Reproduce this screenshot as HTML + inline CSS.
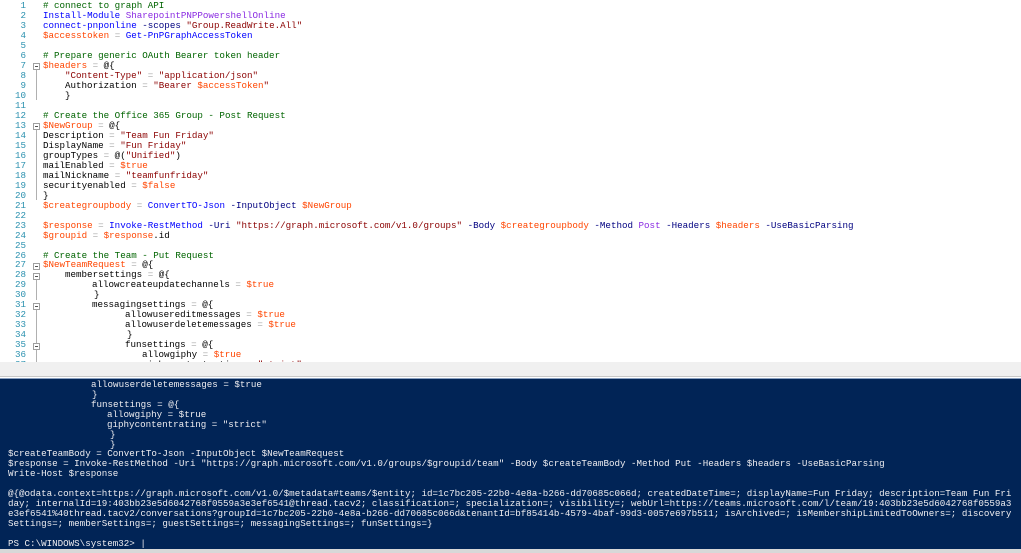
<!DOCTYPE html>
<html><head><meta charset="utf-8"><style>
html,body{margin:0;padding:0;width:1021px;height:553px;overflow:hidden;background:#fff;}
body{font-family:"Liberation Mono",monospace;font-size:9.2px;}
#ed{position:absolute;left:0;top:0;width:1021px;height:362px;overflow:hidden;background:#fff;}
#in{position:absolute;left:0;top:1px;width:1021px;height:370px;}
.l{position:absolute;white-space:pre;line-height:10px;color:#000;}
.n{position:absolute;width:26px;text-align:right;color:#2b91af;line-height:10px;}
.c{color:#006400}.k{color:#0000ff}.s{color:#8b0000}.v{color:#ff4500}.p{color:#000080}.o{color:#a9a9a9}.pu{color:#8a2be2}
.f{position:absolute;left:33px;width:7px;height:7px;border:1px solid #a0a0a0;box-sizing:border-box;background:#fff}
.f:after{content:"";position:absolute;left:1px;top:2px;width:3px;height:1px;background:#555}
.vl{position:absolute;left:36px;width:1px;background:#b0b0b0}
#sb{position:absolute;left:0;top:362px;width:1021px;height:14px;background:#f0f0f0;border-bottom:1px solid #c8c8c8}
#con{position:absolute;left:0;top:378px;width:1021px;height:171px;background:#012456;overflow:hidden;border-top:1px solid #8aa0c0}
#con .l{color:#eeedf0}
#bot{position:absolute;left:0;top:549px;width:1021px;height:4px;background:#d8d8d8}
</style></head><body>
<div id="ed"><div id="in">
<div class="n" style="top:0">1</div><div class="l" style="left:43px;top:0"><span class="c"># connect to graph API</span></div>
<div class="n" style="top:10px">2</div><div class="l" style="left:43px;top:10px"><span class="k">Install-Module</span> <span class="pu">SharepointPNPPowershellOnline</span></div>
<div class="n" style="top:20px">3</div><div class="l" style="left:43px;top:20px"><span class="k">connect-pnponline</span> <span class="p">-scopes</span> <span class="s">"Group.ReadWrite.All"</span></div>
<div class="n" style="top:30px">4</div><div class="l" style="left:43px;top:30px"><span class="v">$accesstoken</span> <span class="o">=</span> <span class="k">Get-PnPGraphAccessToken</span></div>
<div class="n" style="top:40px">5</div>
<div class="n" style="top:50px">6</div><div class="l" style="left:43px;top:50px"><span class="c"># Prepare generic OAuth Bearer token header</span></div>
<div class="n" style="top:60px">7</div><div class="f" style="top:62px"></div><div class="vl" style="top:69px;height:30px"></div><div class="l" style="left:43px;top:60px"><span class="v">$headers</span> <span class="o">=</span> @{</div>
<div class="n" style="top:70px">8</div><div class="l" style="left:65px;top:70px"><span class="s">"Content-Type"</span> <span class="o">=</span> <span class="s">"application/json"</span></div>
<div class="n" style="top:80px">9</div><div class="l" style="left:65px;top:80px">Authorization <span class="o">=</span> <span class="s">"Bearer <span class="v">$accessToken</span>"</span></div>
<div class="n" style="top:90px">10</div><div class="l" style="left:65px;top:90px">}</div>
<div class="n" style="top:100px">11</div>
<div class="n" style="top:110px">12</div><div class="l" style="left:43px;top:110px"><span class="c"># Create the Office 365 Group - Post Request</span></div>
<div class="n" style="top:120px">13</div><div class="f" style="top:122px"></div><div class="vl" style="top:129px;height:70px"></div><div class="l" style="left:43px;top:120px"><span class="v">$NewGroup</span> <span class="o">=</span> @{</div>
<div class="n" style="top:130px">14</div><div class="l" style="left:43px;top:130px">Description <span class="o">=</span> <span class="s">"Team Fun Friday"</span></div>
<div class="n" style="top:140px">15</div><div class="l" style="left:43px;top:140px">DisplayName <span class="o">=</span> <span class="s">"Fun Friday"</span></div>
<div class="n" style="top:150px">16</div><div class="l" style="left:43px;top:150px">groupTypes <span class="o">=</span> @(<span class="s">"Unified"</span>)</div>
<div class="n" style="top:160px">17</div><div class="l" style="left:43px;top:160px">mailEnabled <span class="o">=</span> <span class="v">$true</span></div>
<div class="n" style="top:170px">18</div><div class="l" style="left:43px;top:170px">mailNickname <span class="o">=</span> <span class="s">"teamfunfriday"</span></div>
<div class="n" style="top:180px">19</div><div class="l" style="left:43px;top:180px">securityenabled <span class="o">=</span> <span class="v">$false</span></div>
<div class="n" style="top:190px">20</div><div class="l" style="left:43px;top:190px">}</div>
<div class="n" style="top:200px">21</div><div class="l" style="left:43px;top:200px"><span class="v">$creategroupbody</span> <span class="o">=</span> <span class="k">ConvertTO-Json</span> <span class="p">-InputObject</span> <span class="v">$NewGroup</span></div>
<div class="n" style="top:210px">22</div>
<div class="n" style="top:220px">23</div><div class="l" style="left:43px;top:220px"><span class="v">$response</span> <span class="o">=</span> <span class="k">Invoke-RestMethod</span> <span class="p">-Uri</span> <span class="s">"https://graph.microsoft.com/v1.0/groups"</span> <span class="p">-Body</span> <span class="v">$creategroupbody</span> <span class="p">-Method</span> <span class="pu">Post</span> <span class="p">-Headers</span> <span class="v">$headers</span> <span class="p">-UseBasicParsing</span></div>
<div class="n" style="top:230px">24</div><div class="l" style="left:43px;top:230px"><span class="v">$groupid</span> <span class="o">=</span> <span class="v">$response</span>.id</div>
<div class="n" style="top:240px">25</div>
<div class="n" style="top:250px">26</div><div class="l" style="left:43px;top:250px"><span class="c"># Create the Team - Put Request</span></div>
<div class="n" style="top:259px">27</div><div class="f" style="top:262px"></div><div class="l" style="left:43px;top:259px"><span class="v">$NewTeamRequest</span> <span class="o">=</span> @{</div>
<div class="n" style="top:269px">28</div><div class="f" style="top:272px"></div><div class="vl" style="top:279px;height:20px"></div><div class="l" style="left:65px;top:269px">membersettings <span class="o">=</span> @{</div>
<div class="n" style="top:279px">29</div><div class="l" style="left:92px;top:279px">allowcreateupdatechannels <span class="o">=</span> <span class="v">$true</span></div>
<div class="n" style="top:289px">30</div><div class="l" style="left:94px;top:289px">}</div>
<div class="n" style="top:299px">31</div><div class="f" style="top:302px"></div><div class="vl" style="top:309px;height:40px"></div><div class="l" style="left:92px;top:299px">messagingsettings <span class="o">=</span> @{</div>
<div class="n" style="top:309px">32</div><div class="l" style="left:125px;top:309px">allowusereditmessages <span class="o">=</span> <span class="v">$true</span></div>
<div class="n" style="top:319px">33</div><div class="l" style="left:125px;top:319px">allowuserdeletemessages <span class="o">=</span> <span class="v">$true</span></div>
<div class="n" style="top:329px">34</div><div class="l" style="left:127px;top:329px">}</div>
<div class="n" style="top:339px">35</div><div class="f" style="top:342px"></div><div class="vl" style="top:349px;height:20px"></div><div class="l" style="left:125px;top:339px">funsettings <span class="o">=</span> @{</div>
<div class="n" style="top:349px">36</div><div class="l" style="left:142px;top:349px">allowgiphy <span class="o">=</span> <span class="v">$true</span></div>
<div class="n" style="top:359px">37</div><div class="l" style="left:142px;top:359px">giphycontentrating <span class="o">=</span> <span class="s">"strict"</span></div>
</div></div>
<div id="sb"></div>
<div id="con">
<div class="l" style="left:91px;top:1px">allowuserdeletemessages = $true</div>
<div class="l" style="left:92px;top:11px">}</div>
<div class="l" style="left:91px;top:21px">funsettings = @{</div>
<div class="l" style="left:107px;top:31px">allowgiphy = $true</div>
<div class="l" style="left:107px;top:41px">giphycontentrating = "strict"</div>
<div class="l" style="left:110px;top:51px">}</div>
<div class="l" style="left:110px;top:61px">}</div>
<div class="l" style="left:8px;top:70px">$createTeamBody = ConvertTo-Json -InputObject $NewTeamRequest</div>
<div class="l" style="left:8px;top:80px">$response = Invoke-RestMethod -Uri "https://graph.microsoft.com/v1.0/groups/$groupid/team" -Body $createTeamBody -Method Put -Headers $headers -UseBasicParsing</div>
<div class="l" style="left:8px;top:90px">Write-Host $response</div>
<div class="l" style="left:8px;top:110px">@{@odata.context=https://graph.microsoft.com/v1.0/$metadata#teams/$entity; id=1c7bc205-22b0-4e8a-b266-dd70685c066d; createdDateTime=; displayName=Fun Friday; description=Team Fun Fri</div>
<div class="l" style="left:8px;top:120px">day; internalId=19:403bb23e5d6042768f0559a3e3ef6541@thread.tacv2; classification=; specialization=; visibility=; webUrl=https://teams.microsoft.com/l/team/19:403bb23e5d6042768f0559a3</div>
<div class="l" style="left:8px;top:130px">e3ef6541%40thread.tacv2/conversations?groupId=1c7bc205-22b0-4e8a-b266-dd70685c066d&amp;tenantId=bf85414b-4579-4baf-99d3-0057e697b511; isArchived=; isMembershipLimitedToOwners=; discovery</div>
<div class="l" style="left:8px;top:140px">Settings=; memberSettings=; guestSettings=; messagingSettings=; funSettings=}</div>
<div class="l" style="left:8px;top:160px">PS C:\WINDOWS\system32&gt; |</div>
</div>
<div id="bot"></div>
</body></html>
